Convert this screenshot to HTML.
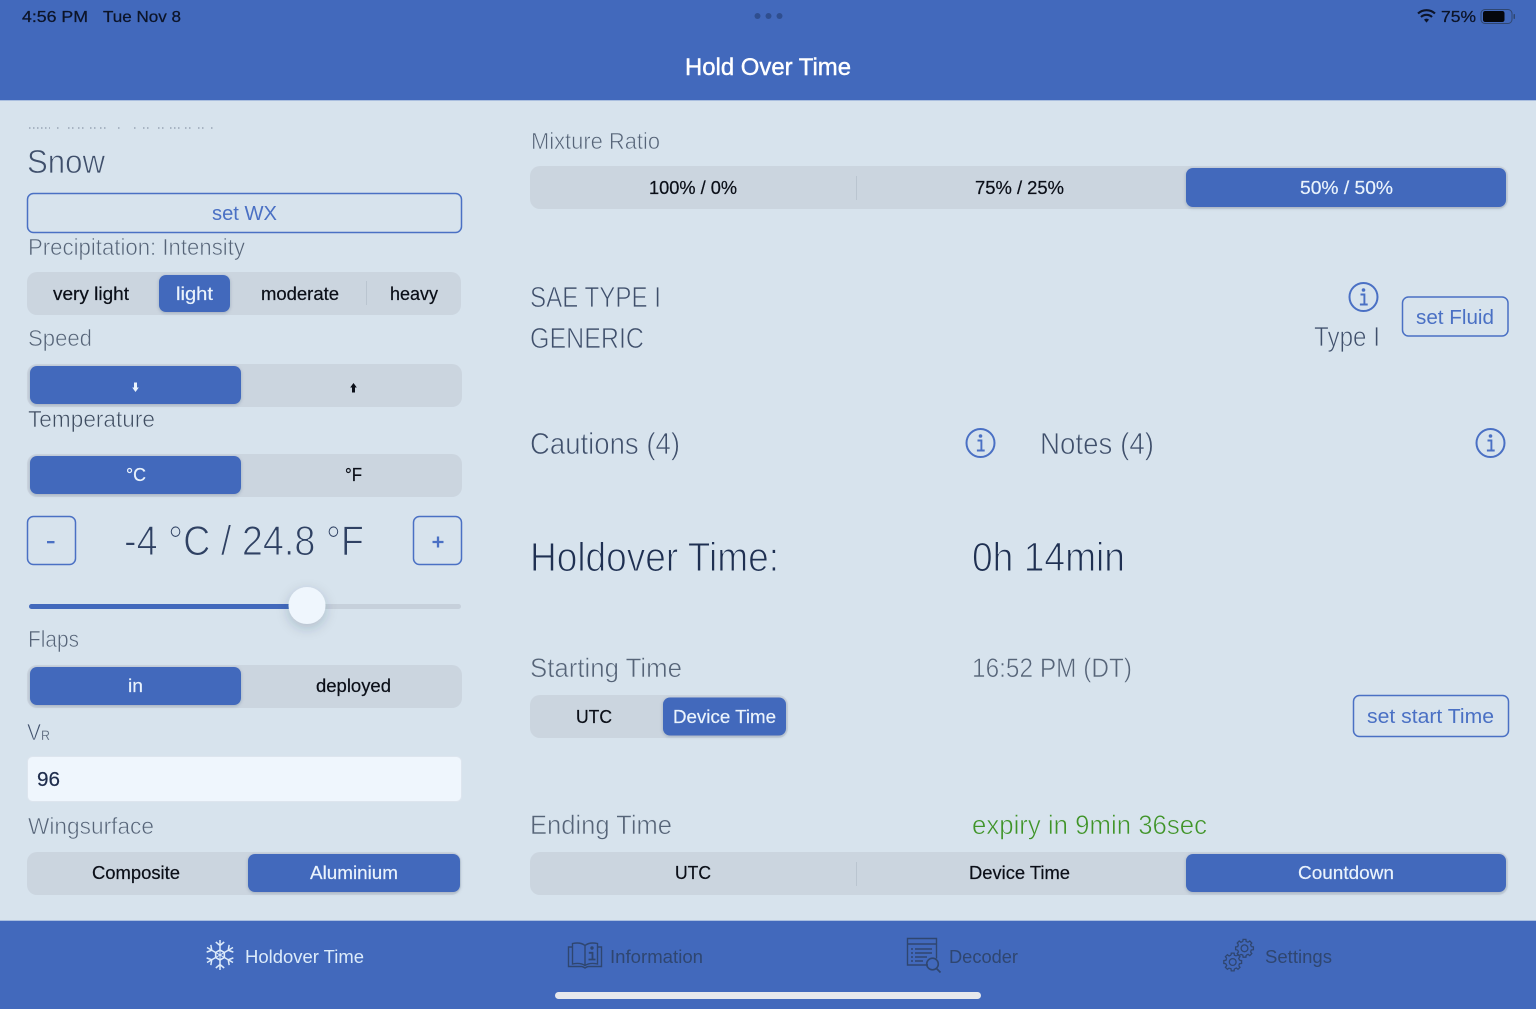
<!DOCTYPE html>
<html><head><meta charset="utf-8"><title>Hold Over Time</title>
<style>
html,body{margin:0;padding:0;background:#D7E3ED;width:1536px;height:1009px;overflow:hidden}
svg{display:block;position:absolute;left:0;top:0}
text{font-family:"Liberation Sans",sans-serif;white-space:pre}
.l{stroke:#D7E3ED;stroke-width:.75;fill:#3f4f6b}
.g{stroke:#D7E3ED;stroke-width:.6;fill:#566478}
.d{stroke:#D7E3ED;stroke-width:1.1;fill:#1f3052}
.s{font-size:18px;fill:#0b0f18;stroke:#0b0f18;stroke-width:.22}
.w{font-size:18px;fill:#EAF3FC;stroke:#EAF3FC;stroke-width:.18}
.b{font-size:20px;fill:#4A70C4}
.st{fill:#0c1428;stroke:#0c1428;stroke-width:.25}
.seg{fill:#CBD5DF}
.sel{fill:#4269BC;filter:url(#sh)}
.btn{fill:none;stroke:#4A70C4;stroke-width:1.5}
.ic{fill:none;stroke:#2F4670;stroke-width:1.4}
</style></head><body>
<svg width="1536" height="1009" viewBox="0 0 1536 1009" xmlns="http://www.w3.org/2000/svg">
<defs>
<filter id="sh" x="-10%" y="-20%" width="120%" height="140%"><feDropShadow dx="0" dy="1" stdDeviation="1.5" flood-color="#27344d" flood-opacity=".25"/></filter>
<filter id="th" x="-50%" y="-50%" width="200%" height="200%"><feDropShadow dx="0" dy="4" stdDeviation="6" flood-color="#27344d" flood-opacity=".22"/></filter>
<g id="info"><circle r="14" fill="none" stroke="#4A70C4" stroke-width="2"/><circle cy="-7" r="1.8" fill="#4A70C4"/><path d="M-3-2.500H.9V7M-3.600 7.500H4.200" fill="none" stroke="#4A70C4" stroke-width="1.900"/></g>
<g id="arm"><path d="M0-5V-15M-4.200-13 0-9.500 4.200-13M-4.300-2.500 0-5 4.300-2.500" fill="none" stroke="#DCEBFA" stroke-width="1.500"/></g>
<path id="tooth" d="M-1.690-6.790L-1.410-8.890L1.410-8.890L1.690-6.790A7 7 0 0 1 3.600-6" fill="none" stroke="#2F4670" stroke-width="1.300"/>
<g id="gear">
<use href="#tooth"/><use href="#tooth" transform="rotate(45)"/><use href="#tooth" transform="rotate(90)"/><use href="#tooth" transform="rotate(135)"/><use href="#tooth" transform="rotate(180)"/><use href="#tooth" transform="rotate(225)"/><use href="#tooth" transform="rotate(270)"/><use href="#tooth" transform="rotate(315)"/>
<circle r="3.400" fill="none" stroke="#2F4670" stroke-width="1.300"/>
</g>
</defs>

<rect width="1536" height="1009" fill="#D7E3ED"/>
<rect width="1536" height="100" fill="#4269BC"/>
<rect y="100" width="1536" height="1" fill="#A9BEDF"/>

<!-- status -->
<text class="st" x="22" y="22" font-size="16" textLength="66" lengthAdjust="spacingAndGlyphs">4:56 PM</text>
<text class="st" x="103" y="22" font-size="16" textLength="78" lengthAdjust="spacingAndGlyphs">Tue Nov 8</text>
<circle cx="757.500" cy="16" r="3" fill="#2F4E8F"/><circle cx="768.500" cy="16" r="3" fill="#2F4E8F"/><circle cx="779.500" cy="16" r="3" fill="#2F4E8F"/>
<g fill="none" stroke="#0c1428" stroke-width="2.200"><path d="M1418 13.500a12.500 12.500 0 0 1 17 0"/><path d="M1421 17a8 8 0 0 1 11 0"/></g>
<path d="M1424 19.600a3.600 3.600 0 0 1 5 0L1426.500 22.600Z" fill="#0c1428"/>
<text class="st" x="1441" y="22" font-size="16" textLength="35" lengthAdjust="spacingAndGlyphs">75%</text>
<rect x="1481" y="9.500" width="31" height="14" rx="4" fill="none" stroke="#2F4670" stroke-width="1"/>
<rect x="1483" y="11" width="21.500" height="11" rx="2.200" fill="#05070d"/>
<rect x="1513.500" y="14" width="1.500" height="5" rx=".7" fill="#2F4670"/>
<text x="685" y="75" font-size="24" fill="#fff" stroke="#fff" stroke-width=".4" textLength="166" lengthAdjust="spacingAndGlyphs">Hold Over Time</text>

<!-- left column -->
<g stroke="#8b98aa" stroke-width="1.300"><path stroke-dasharray="1.500 2.500" d="M29 128H50M57 128H59M68 128H74M78 128H84M90 128H96M100 128H107M118 128H120M134 128H138M143 128H150M158 128H166M170 128H180M185 128H192M198 128H205M211 128H214"/></g>
<text class="l" x="27" y="173" font-size="33" textLength="78" lengthAdjust="spacingAndGlyphs">Snow</text>
<rect class="btn" x="27.500" y="193.500" width="434" height="39" rx="6"/>
<text class="b" x="212" y="220" textLength="65" lengthAdjust="spacingAndGlyphs">set WX</text>
<text class="g" x="28" y="255" font-size="23" textLength="217" lengthAdjust="spacingAndGlyphs">Precipitation: Intensity</text>

<rect class="seg" x="27" y="272" width="434" height="43" rx="10"/>
<rect class="sel" x="159" y="275" width="71" height="37" rx="7"/>
<rect x="366" y="281" width="1" height="24" fill="#BAC5D0"/>
<text class="s" x="53" y="300" textLength="76" lengthAdjust="spacingAndGlyphs">very light</text>
<text class="w" x="176" y="300" textLength="37" lengthAdjust="spacingAndGlyphs">light</text>
<text class="s" x="261" y="300" textLength="78" lengthAdjust="spacingAndGlyphs">moderate</text>
<text class="s" x="390" y="300" textLength="48" lengthAdjust="spacingAndGlyphs">heavy</text>

<text class="g" x="28" y="346" font-size="23" textLength="64" lengthAdjust="spacingAndGlyphs">Speed</text>
<rect class="seg" x="27" y="364" width="435" height="43" rx="10"/>
<rect class="sel" x="30" y="366" width="211" height="38" rx="7"/>
<path d="M134 382.500h3v5h1.800l-3.300 4.500-3.300-4.500h1.800z" fill="#EAF3FC"/>
<path d="M352 392.500h3v-5h1.800l-3.300-4.500-3.300 4.500h1.800z" fill="#0b0f18"/>

<text x="28" y="427" font-size="23" fill="#3f4d61" stroke="#D7E3ED" stroke-width=".6" textLength="127" lengthAdjust="spacingAndGlyphs">Temperature</text>
<rect class="seg" x="27" y="454" width="435" height="43" rx="10"/>
<rect class="sel" x="30" y="456" width="211" height="38" rx="7"/>
<text class="w" x="126" y="481" textLength="20" lengthAdjust="spacingAndGlyphs">°C</text>
<text class="s" x="345" y="481" textLength="17" lengthAdjust="spacingAndGlyphs">°F</text>

<rect class="btn" x="27.500" y="516.500" width="48" height="48" rx="6"/>
<rect x="47" y="541" width="7.500" height="2.300" fill="#4A70C4"/>
<rect class="btn" x="413.500" y="516.500" width="48" height="48" rx="6"/>
<path d="M438 536.500v11M432.500 542h11" stroke="#4A70C4" stroke-width="2.300" fill="none"/>
<text class="d" x="124" y="555" font-size="42" textLength="240" lengthAdjust="spacingAndGlyphs" style="fill:#2f4163">-4 °C / 24.8 °F</text>

<rect x="29" y="604" width="432" height="5" rx="2.500" fill="#C6D0DB"/>
<rect x="29" y="604" width="262" height="5" rx="2.500" fill="#4269BC"/>
<circle cx="307" cy="605.500" r="18.500" fill="#EFF6FD" filter="url(#th)"/>

<text class="g" x="28" y="647" font-size="23" textLength="51" lengthAdjust="spacingAndGlyphs">Flaps</text>
<rect class="seg" x="27" y="665" width="435" height="43" rx="10"/>
<rect class="sel" x="30" y="667" width="211" height="38" rx="7"/>
<text class="w" x="128" y="692" textLength="15" lengthAdjust="spacingAndGlyphs">in</text>
<text class="s" x="316" y="692" textLength="75" lengthAdjust="spacingAndGlyphs">deployed</text>

<text class="l" x="27" y="740" font-size="23" textLength="14" lengthAdjust="spacingAndGlyphs">V</text>
<text class="g" x="41" y="740" font-size="14" textLength="9" lengthAdjust="spacingAndGlyphs" style="stroke-width:.2">R</text>
<rect x="27.500" y="756.500" width="434" height="45" rx="5" fill="#EFF6FD" stroke="#DDE5EE"/>
<text x="37" y="786" font-size="20" fill="#1f2d4d" stroke="#1f2d4d" stroke-width=".2" textLength="23" lengthAdjust="spacingAndGlyphs">96</text>

<text class="g" x="28" y="834" font-size="23" textLength="126" lengthAdjust="spacingAndGlyphs">Wingsurface</text>
<rect class="seg" x="27" y="852" width="434" height="43" rx="10"/>
<rect class="sel" x="248" y="854" width="212" height="38" rx="7"/>
<text class="s" x="92" y="879" textLength="88" lengthAdjust="spacingAndGlyphs">Composite</text>
<text class="w" x="310" y="879" textLength="88" lengthAdjust="spacingAndGlyphs">Aluminium</text>

<!-- right column -->
<text class="g" x="531" y="149" font-size="23" textLength="129" lengthAdjust="spacingAndGlyphs">Mixture Ratio</text>
<rect class="seg" x="530" y="166" width="978" height="43" rx="10"/>
<rect class="sel" x="1186" y="168" width="320" height="39" rx="7"/>
<rect x="856" y="176" width="1" height="24" fill="#BAC5D0"/>
<text class="s" x="649" y="194" textLength="88" lengthAdjust="spacingAndGlyphs">100% / 0%</text>
<text class="s" x="975" y="194" textLength="89" lengthAdjust="spacingAndGlyphs">75% / 25%</text>
<text class="w" x="1300" y="194" textLength="93" lengthAdjust="spacingAndGlyphs">50% / 50%</text>

<text class="l" x="530" y="307" font-size="29" textLength="131" lengthAdjust="spacingAndGlyphs">SAE TYPE I</text>
<text class="l" x="530" y="348" font-size="29" textLength="114" lengthAdjust="spacingAndGlyphs">GENERIC</text>
<use href="#info" x="1363.500" y="297"/>
<text class="l" x="1314" y="346" font-size="28" textLength="66" lengthAdjust="spacingAndGlyphs">Type I</text>
<rect class="btn" x="1402.500" y="297" width="105.500" height="39" rx="6"/>
<text class="b" x="1416" y="324" textLength="78" lengthAdjust="spacingAndGlyphs">set Fluid</text>

<text class="l" x="530" y="454" font-size="31" textLength="150" lengthAdjust="spacingAndGlyphs">Cautions (4)</text>
<use href="#info" x="980.500" y="443"/>
<text class="l" x="1040" y="454" font-size="31" textLength="114" lengthAdjust="spacingAndGlyphs">Notes (4)</text>
<use href="#info" x="1490.500" y="443"/>

<text class="d" x="530" y="571" font-size="41" textLength="249" lengthAdjust="spacingAndGlyphs">Holdover Time:</text>
<text class="d" x="972" y="571" font-size="41" textLength="153" lengthAdjust="spacingAndGlyphs">0h 14min</text>

<text class="g" x="530" y="677" font-size="27" textLength="152" lengthAdjust="spacingAndGlyphs">Starting Time</text>
<text class="g" x="972" y="677" font-size="27" textLength="160" lengthAdjust="spacingAndGlyphs">16:52 PM (DT)</text>
<rect class="seg" x="530" y="695" width="258" height="43" rx="10"/>
<rect class="sel" x="663" y="697.500" width="123" height="38" rx="7"/>
<text class="s" x="576" y="723" textLength="36" lengthAdjust="spacingAndGlyphs">UTC</text>
<text class="w" x="673" y="723" textLength="103" lengthAdjust="spacingAndGlyphs">Device Time</text>
<rect class="btn" x="1353.500" y="695.500" width="155" height="41" rx="6"/>
<text class="b" x="1367" y="723" textLength="127" lengthAdjust="spacingAndGlyphs">set start Time</text>

<text class="g" x="530" y="834" font-size="27" textLength="142" lengthAdjust="spacingAndGlyphs">Ending Time</text>
<text x="972" y="834" font-size="27" fill="#3f9428" stroke="#D7E3ED" stroke-width=".6" textLength="235" lengthAdjust="spacingAndGlyphs">expiry in 9min 36sec</text>
<rect class="seg" x="530" y="852" width="978" height="43" rx="10"/>
<rect class="sel" x="1186" y="854" width="320" height="38" rx="7"/>
<rect x="856" y="862" width="1" height="24" fill="#BAC5D0"/>
<text class="s" x="675" y="879" textLength="36" lengthAdjust="spacingAndGlyphs">UTC</text>
<text class="s" x="969" y="879" textLength="101" lengthAdjust="spacingAndGlyphs">Device Time</text>
<text class="w" x="1298" y="879" textLength="96" lengthAdjust="spacingAndGlyphs">Countdown</text>

<!-- tab bar -->
<rect y="921" width="1536" height="88" fill="#4269BC"/>
<rect y="920" width="1536" height="1" fill="#A9BEDF"/>
<g transform="translate(220 955)">
<use href="#arm"/><use href="#arm" transform="rotate(60)"/><use href="#arm" transform="rotate(120)"/><use href="#arm" transform="rotate(180)"/><use href="#arm" transform="rotate(240)"/><use href="#arm" transform="rotate(300)"/>
<path d="M0-5V5M-4.300-2.500 4.300 2.500M-4.300 2.500 4.300-2.500" stroke="#DCEBFA" stroke-width="1"/>
</g>
<text x="245" y="963" font-size="18" fill="#DCEBFA" textLength="119" lengthAdjust="spacingAndGlyphs">Holdover Time</text>

<g class="ic">
<path d="M572.500 947h-4v19.500h13c1.500 0 2.500 1 3.500 1.500 1-.5 2-1.500 3.500-1.500h13V947h-4"/>
<path d="M572.500 964V943.500c5-1 9.500-.5 12.500 2 3-2.500 7.500-3 12.500-2V964c-5-1-9.500-.5-12.500 1.500-3-2-7.500-2.500-12.500-1.500Z"/>
<path d="M585 945.500v20"/>
</g>
<path d="M588.800 952.800h3.700v6.400M588.500 959.500h7" fill="none" stroke="#2F4670" stroke-width="1.800"/>
<circle cx="592" cy="948" r="1.700" fill="#2F4670"/>
<text x="610" y="963" font-size="18" fill="#2F4670" textLength="93" lengthAdjust="spacingAndGlyphs">Information</text>

<g class="ic">
<path d="M928 965h-20.500v-26.500h29v20"/>
<path d="M907.500 944h29" stroke-width="1.600"/>
<path d="M911 949h2M915 949h17M911 953h2M915 953h17M911 957h2M915 957h12M911 961h2M915 961h8"/>
<circle cx="932.500" cy="964" r="5.800" stroke-width="1.600"/>
<path d="M936.500 968.500l4 4" stroke-width="1.800"/>
</g>
<text x="949" y="963" font-size="18" fill="#2F4670" textLength="69" lengthAdjust="spacingAndGlyphs">Decoder</text>

<use href="#gear" x="1244.500" y="948.300"/>
<use href="#gear" x="1232.700" y="962"/>
<text x="1265" y="963" font-size="18" fill="#2F4670" textLength="67" lengthAdjust="spacingAndGlyphs">Settings</text>

<rect x="555" y="992" width="426" height="7" rx="3.500" fill="#E6E8EC"/>
</svg>
</body></html>
